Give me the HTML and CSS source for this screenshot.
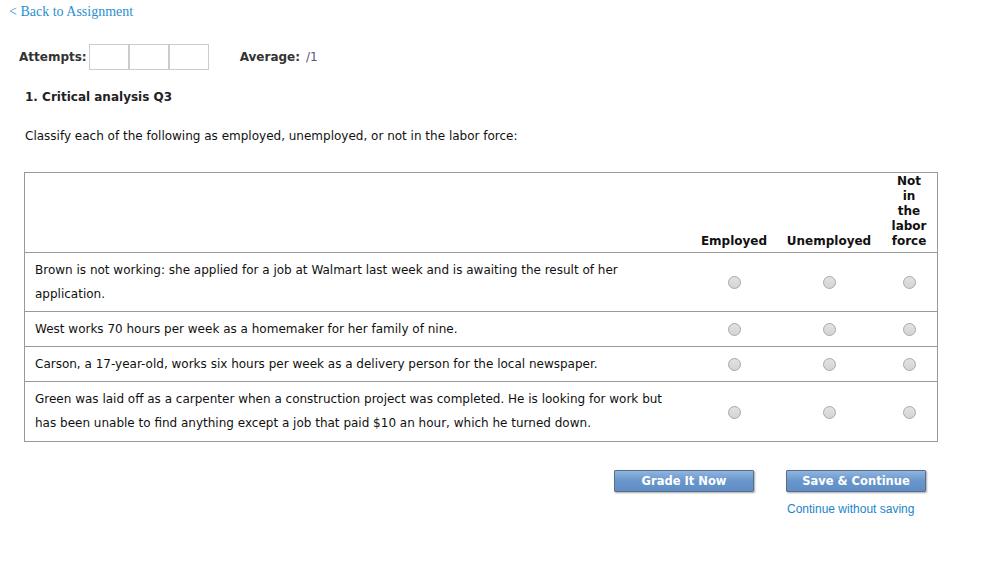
FILE: index.html
```html
<!DOCTYPE html>
<html>
<head>
<meta charset="utf-8">
<link rel="stylesheet" href="styles.css">
</head>
<body>
<div class="page">
  <a class="back" href="#">&lt; Back to Assignment</a>
  <div class="attempts-row">
    <span class="lbl">Attempts:</span>
    <div class="boxes"><span class="box"></span><span class="box"></span><span class="box"></span></div>
    <span class="lbl avg">Average:</span>
    <span class="score">/1</span>
  </div>
  <h1 class="qtitle">1. Critical analysis Q3</h1>
  <p class="instr">Classify each of the following as employed, unemployed, or not in the labor force:</p>
  <table class="grid">
    <thead>
      <tr>
        <th class="stmt"></th>
        <th class="c1">Employed</th>
        <th class="c2">Unemployed</th>
        <th class="c3">Not in the labor force</th>
      </tr>
    </thead>
    <tbody>
      <tr>
        <td class="stmt">Brown is not working: she applied for a job at Walmart last week and is awaiting the result of her application.</td>
        <td><span class="radio"></span></td><td><span class="radio"></span></td><td><span class="radio"></span></td>
      </tr>
      <tr>
        <td class="stmt">West works 70 hours per week as a homemaker for her family of nine.</td>
        <td><span class="radio"></span></td><td><span class="radio"></span></td><td><span class="radio"></span></td>
      </tr>
      <tr>
        <td class="stmt">Carson, a 17-year-old, works six hours per week as a delivery person for the local newspaper.</td>
        <td><span class="radio"></span></td><td><span class="radio"></span></td><td><span class="radio"></span></td>
      </tr>
      <tr class="tall">
        <td class="stmt">Green was laid off as a carpenter when a construction project was completed. He is looking for work but has been unable to find anything except a job that paid $10 an hour, which he turned down.</td>
        <td><span class="radio"></span></td><td><span class="radio"></span></td><td><span class="radio"></span></td>
      </tr>
    </tbody>
  </table>
  <div class="actions">
    <div class="btncol"><button class="btn">Grade It Now</button></div>
    <div class="btncol"><button class="btn">Save &amp; Continue</button><a class="skip" href="#">Continue without saving</a></div>
  </div>
</div>
</body>
</html>
```
FILE: styles.css
```css
html, body { margin: 0; padding: 0; background: #fff; }
body { font-family: Verdana, "DejaVu Sans", sans-serif; font-size: 12px; color: #222; }
.page { padding: 4px 0 0 9px; }
.back { font-family: Georgia, "Liberation Serif", serif; font-size: 14px; color: #2a8fd0; text-decoration: none; display: block; line-height: 16px; }
.attempts-row { display: flex; align-items: center; margin: 24px 0 0 10px; height: 26px; }
.lbl { font-weight: bold; color: #333; }
.boxes { display: flex; margin-left: 2px; }
.box { width: 38px; height: 24px; border: 1px solid #ccc; }
.avg { margin-left: 31px; }
.score { margin-left: 6px; color: #555577; }
.qtitle { font-size: 12px; font-weight: bold; margin: 19px 0 0 16px; color: #222; line-height: 16px; }
.instr { margin: 23px 0 0 16px; line-height: 16px; color: #111; }
.grid { margin: 28px 0 0 15px; width: 914px; border-collapse: collapse; border: 1px solid #999; }
.grid th { font-weight: bold; text-align: center; vertical-align: bottom; padding: 1px 4px 3px; line-height: 15px; color: #111; }
.grid th.c1 { width: 78px; }
.grid th.c2 { width: 96px; }
.grid th.c3 { width: 38px; padding-left: 9px; padding-right: 9px; }
.grid td { border-top: 1px solid #999; text-align: center; vertical-align: middle; padding: 5px 0; }
.grid td.stmt { text-align: left; padding: 5px 10px; line-height: 24px; color: #111; }
.grid tr.tall td.stmt { padding-bottom: 6px; }
.radio { display: inline-block; width: 11px; height: 11px; border-radius: 50%; border: 1px solid #a9a9a9; background: linear-gradient(#e2e2e2, #d4d4d4); vertical-align: middle; }
.actions { display: flex; margin: 28px 0 0 605px; gap: 32px; }
.btncol { display: flex; flex-direction: column; align-items: flex-start; }
.btn { width: 140px; height: 22px; border: 1px solid #5c6e85; border-radius: 1px; background: linear-gradient(#8fb5df, #6896cb 50%, #5f8ec6); color: #fff; font-family: Verdana, "DejaVu Sans", sans-serif; font-weight: bold; font-size: 11.5px; box-shadow: 1px 1px 2px rgba(0,0,0,0.35); padding: 0; }
.skip { margin-top: 10px; margin-left: 1px; color: #1a86c8; text-decoration: none; font-family: "Liberation Sans", Arial, sans-serif; font-size: 12px; }
```
